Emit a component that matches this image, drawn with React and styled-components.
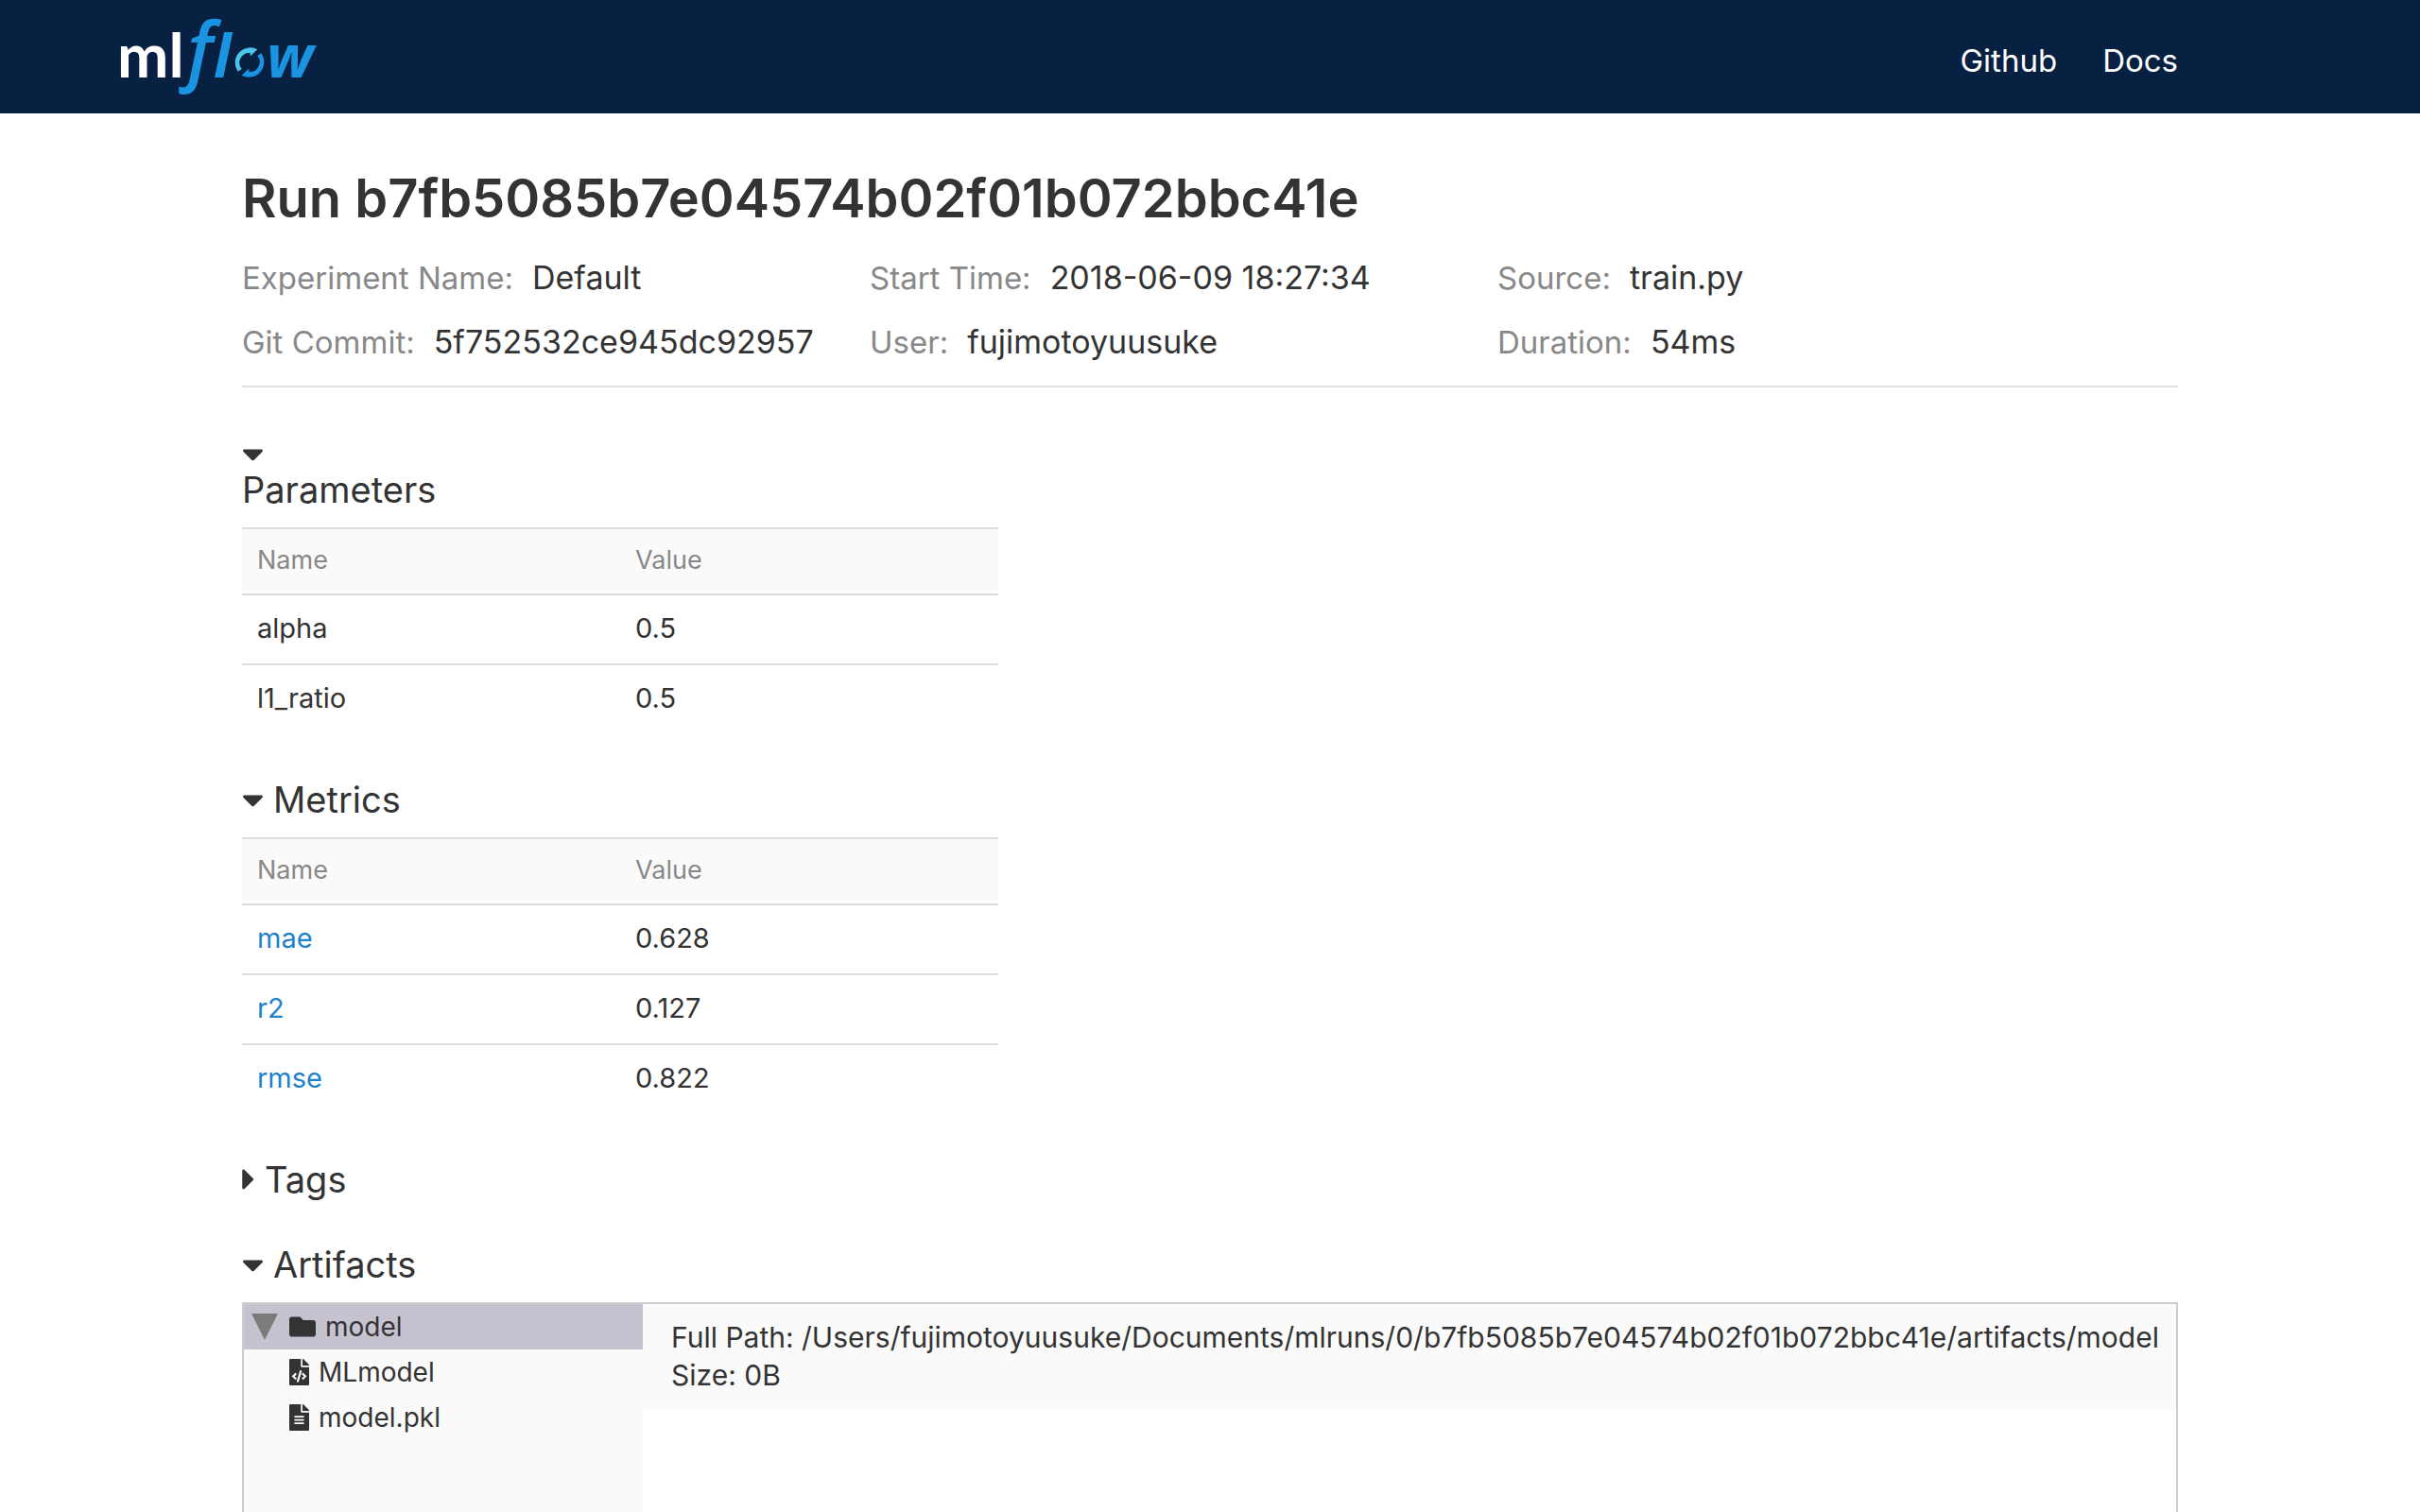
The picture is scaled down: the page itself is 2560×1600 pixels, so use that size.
import { useState } from 'react'
import styled, { createGlobalStyle } from 'styled-components'
import { FaCaretDown, FaCaretRight, FaFolder, FaFileCode, FaFileAlt } from 'react-icons/fa'

const GlobalStyle = createGlobalStyle`
    *{
        box-sizing: border-box;
    }

    body{
        margin: 0;
        background: #fff;
        color: #333;
        font-family: Inter, 'Liberation Sans', sans-serif;
    }
`

const Page = styled.div`
    display: flex;
    flex-direction: column;
    min-height: 100vh;
`

const Header = styled.header`
    display: flex;
    align-items: center;
    justify-content: space-between;
    height: 120px;
    padding: 0 10% 0 5%;
    background: #082142;
`

const LogoLink = styled.a`
    display: block;
    margin-left: -8px;

    svg{
        display: block;
        overflow: visible;
    }
`

const Nav = styled.nav`
    display: flex;
    gap: 48px;
    padding-top: 7px;

    a{
        color: #fff;
        font-size: 33px;
        line-height: 40px;
        text-decoration: none;
    }
`

const Content = styled.main`
    display: flex;
    flex: 1;
    flex-direction: column;
    padding: 60px 10% 0;
`

const Title = styled.h1`
    margin: 0 0 20px;
    font-size: 56px;
    font-weight: 600;
    line-height: 60px;
`

const RunInfo = styled.dl`
    display: grid;
    grid-template-columns: 664px 664px 1fr;
    margin: 0;
    padding-bottom: 12px;
    border-bottom: 2px solid #e2e2e2;
`

const InfoItem = styled.div`
    display: flex;
    align-items: baseline;
    gap: 20px;
    line-height: 68px;
    white-space: nowrap;

    dt{
        color: #888;
        font-size: 33px;
    }

    dd{
        margin: 0;
        font-size: 34px;
    }
`

const Sections = styled.div`
    display: grid;
    flex: 1;
    grid-template-rows: auto auto auto 1fr;
    gap: 50px;
    margin-top: 52px;
`

const SectionBlock = styled.section`
    display: flex;
    flex-direction: column;
    gap: 20px;
`

const SectionTitle = styled.h2`
    margin: 0;
    font-size: 38px;
    font-weight: 400;
    line-height: 40px;

    button{
        display: flex;
        flex-direction: ${props => props.$stacked ? 'column' : 'row'};
        align-items: ${props => props.$stacked ? 'flex-start' : 'center'};
        gap: ${props => props.$stacked ? '0' : '10px'};
        padding: 0;
        border: 0;
        background: none;
        color: inherit;
        font: inherit;
        cursor: pointer;
    }

    svg{
        display: block;
        width: ${props => props.$open ? '23px' : '14px'};
        height: 36px;
    }
`

const Table = styled.table`
    width: 800px;
    border-collapse: separate;
    border-spacing: 0;
    table-layout: fixed;
    font-size: 29px;
    text-align: left;

    th{
        height: 72px;
        padding: 0 16px 3px;
        border-top: 2px solid #ddd;
        border-bottom: 2px solid #ddd;
        background: #fafafa;
        color: #888;
        font-size: 27px;
        font-weight: 400;
    }

    td{
        height: 74px;
        padding: 0 16px 3px;
        border-bottom: 2px solid #ddd;
    }

    tr:last-child td{
        height: 72px;
        border-bottom: 0;
    }

    a{
        color: #1d82ca;
        text-decoration: none;
    }
`

const ArtifactView = styled.div`
    display: flex;
    flex: 1;
    border: 2px solid #ccc;
    border-bottom: 0;
`

const Tree = styled.ul`
    flex: none;
    width: 422px;
    margin: 0;
    padding: 0;
    background: #fafafa;
    list-style: none;
`

const TreeRow = styled.li`
    display: flex;
    align-items: center;
    gap: 10px;
    height: 48px;
    padding-left: ${props => props.$child ? '48px' : '8px'};
    background: ${props => props.$selected ? '#c7c2d0' : 'none'};
    font-size: 28px;

    svg{
        display: block;
        flex: none;
        width: ${props => props.$child ? '21px' : '28px'};
        height: 28px;
    }
`

const Toggle = styled.button`
    width: 28px;
    height: 28px;
    margin-right: 2px;
    padding: 0;
    border: 0;
    background: #7b7b7b;
    clip-path: polygon(0 0, 100% 0, 50% 100%);
    cursor: pointer;
`

const Detail = styled.div`
    flex: 1;
    min-width: 0;
`

const DetailInfo = styled.div`
    padding: 15px 0 17px 30px;
    background: #fafafa;
    font-size: 30px;
    line-height: 40px;
    white-space: nowrap;
`

const Logo = () => (
    <svg width="220" height="120" viewBox="0 0 220 120" role="img" aria-label="mlflow">
        <text x="4" y="82" fill="#fff" fontFamily="Lato" fontSize="65" fontWeight="700">ml</text>
        <g fill="#1a93e0" fontFamily="Open Sans" fontStyle="italic">
            <text x="78" y="81" fontSize="79" fontWeight="600">f</text>
            <text x="106" y="82" fontSize="62" fontWeight="700">l</text>
            <text x="162" y="82" fontSize="63" fontWeight="700">w</text>
        </g>
        <path d="M131.7 75.7A16 16 0 0 1 152.3 52.3L144.8 59.4L144.6 56A10.4 10.4 0 0 0 135.7 73z" fill="#4bc6ea" />
        <path d="M131.7 75.7A16 16 0 0 1 152.3 52.3L144.8 59.4L144.6 56A10.4 10.4 0 0 0 135.7 73z" fill="#1a93e0" transform="rotate(180 144 66)" />
    </svg>
)

const runInfo = [
    ['Experiment Name:', 'Default'],
    ['Start Time:', '2018-06-09 18:27:34'],
    ['Source:', 'train.py'],
    ['Git Commit:', '5f752532ce945dc92957'],
    ['User:', 'fujimotoyuusuke'],
    ['Duration:', '54ms'],
]

const params = [['alpha', '0.5'], ['l1_ratio', '0.5']]

const metrics = [['mae', '0.628'], ['r2', '0.127'], ['rmse', '0.822']]

const Section = ({ title, stacked, defaultOpen = true, children }) => {
    const [open, setOpen] = useState(defaultOpen)

    return (
        <SectionBlock>
            <SectionTitle $stacked={stacked} $open={open}>
                <button type="button" aria-expanded={open} onClick={() => setOpen(!open)}>
                    {open ? <FaCaretDown /> : <FaCaretRight viewBox="0 0 192 512" />}
                    <span>{title}</span>
                </button>
            </SectionTitle>
            {open && children}
        </SectionBlock>
    )
}

const DataTable = ({ rows, linked }) => (
    <Table>
        <thead>
            <tr>
                <th scope="col">Name</th>
                <th scope="col">Value</th>
            </tr>
        </thead>
        <tbody>
            {rows.map(([name, value]) => (
                <tr key={name}>
                    <td>{linked ? <a href={`#${name}`}>{name}</a> : name}</td>
                    <td>{value}</td>
                </tr>
            ))}
        </tbody>
    </Table>
)

const App = () => {
    const [expanded, setExpanded] = useState(true)

    return (
        <Page>
            <GlobalStyle />
            <Header>
                <LogoLink href="#"><Logo /></LogoLink>
                <Nav>
                    <a href="#github">Github</a>
                    <a href="#docs">Docs</a>
                </Nav>
            </Header>

            <Content>
                <Title>Run b7fb5085b7e04574b02f01b072bbc41e</Title>
                <RunInfo>
                    {runInfo.map(([label, value]) => (
                        <InfoItem key={label}>
                            <dt>{label}</dt>
                            <dd>{value}</dd>
                        </InfoItem>
                    ))}
                </RunInfo>

                <Sections>
                    <Section title="Parameters" stacked>
                        <DataTable rows={params} />
                    </Section>

                    <Section title="Metrics">
                        <DataTable rows={metrics} linked />
                    </Section>

                    <Section title="Tags" defaultOpen={false} />

                    <Section title="Artifacts">
                        <ArtifactView>
                            <Tree>
                                <TreeRow $selected>
                                    <Toggle type="button" aria-label="Toggle model" onClick={() => setExpanded(!expanded)} />
                                    <FaFolder />
                                    <span>model</span>
                                </TreeRow>
                                {expanded && (
                                    <>
                                        <TreeRow $child>
                                            <FaFileCode />
                                            <span>MLmodel</span>
                                        </TreeRow>
                                        <TreeRow $child>
                                            <FaFileAlt />
                                            <span>model.pkl</span>
                                        </TreeRow>
                                    </>
                                )}
                            </Tree>
                            <Detail>
                                <DetailInfo>
                                    <div>Full Path: /Users/fujimotoyuusuke/Documents/mlruns/0/b7fb5085b7e04574b02f01b072bbc41e/artifacts/model</div>
                                    <div>Size: 0B</div>
                                </DetailInfo>
                            </Detail>
                        </ArtifactView>
                    </Section>
                </Sections>
            </Content>
        </Page>
    )
}

export default App
